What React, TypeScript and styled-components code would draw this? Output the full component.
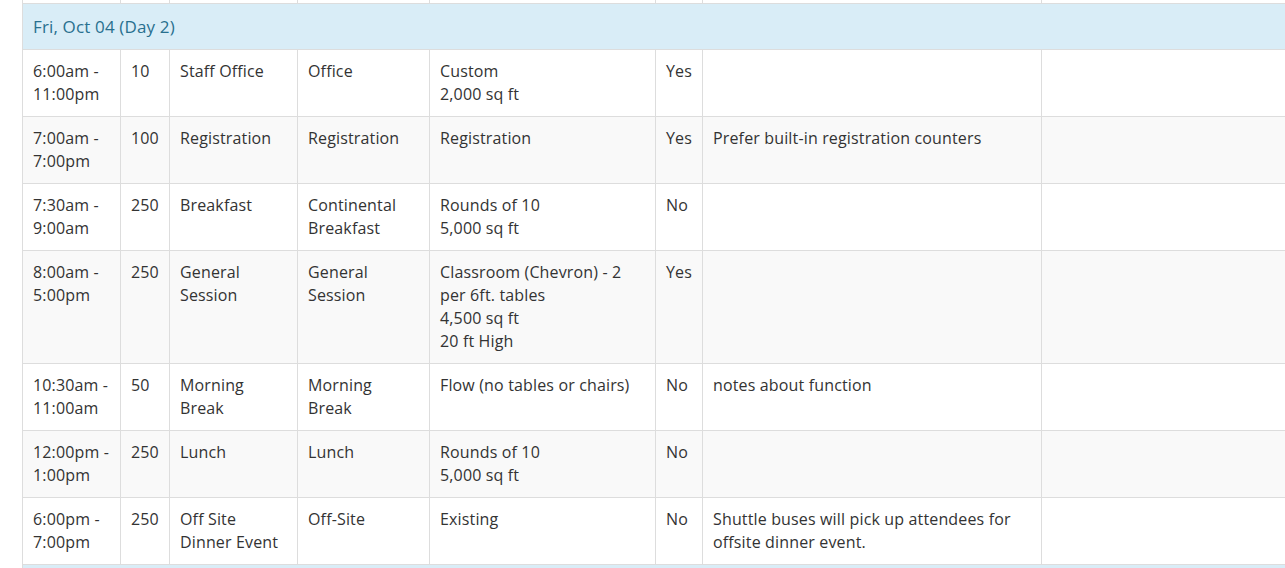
import React from "react";
import styled, { createGlobalStyle } from "styled-components";

const GlobalStyle = createGlobalStyle`
	html, body {
		margin: 0;
		padding: 0;
		background: #fff;
		overflow: hidden;
	}
	body {
		font-family: "Open Sans", "Liberation Sans", sans-serif;
		font-size: 16px;
		letter-spacing: 0.15px;
		color: #333;
	}
`;

const Page = styled.div`
	padding-left: 22px;
`;

const Table = styled.table`
	border-collapse: collapse;
	table-layout: fixed;
	width: 1320px;
	margin-top: -1px;
`;

const Cell = styled.td`
	border: 1px solid #ddd;
	padding: 10px;
	line-height: 23px;
	vertical-align: top;
	text-align: left;
	overflow-wrap: break-word;
`;

const SpacerCell = styled(Cell)`
	padding: 0;
	height: 3px;
	line-height: 0;
`;

const DayCell = styled.td`
	background: #d9edf7;
	color: #28708f;
	font-size: 17px;
	line-height: 24px;
	padding: 11px 10px 10px;
	border: 1px solid #ddd;
`;

const Row = styled.tr<{ striped?: boolean }>`
	background: ${props => props.striped ? '#f9f9f9' : '#fff'};
`;

const colWidths = [98, 49, 128, 132, 226, 47, 339, 301];

interface IFunctionRow {
	time: string;
	people: string;
	name: string;
	type: string;
	setup: string[];
	avIp: string;
	notes: string;
}

const rows: IFunctionRow[] = [
	{ time: '6:00am - 11:00pm', people: '10', name: 'Staff Office', type: 'Office', setup: ['Custom', '2,000 sq ft'], avIp: 'Yes', notes: '' },
	{ time: '7:00am - 7:00pm', people: '100', name: 'Registration', type: 'Registration', setup: ['Registration'], avIp: 'Yes', notes: 'Prefer built-in registration counters' },
	{ time: '7:30am - 9:00am', people: '250', name: 'Breakfast', type: 'Continental Breakfast', setup: ['Rounds of 10', '5,000 sq ft'], avIp: 'No', notes: '' },
	{ time: '8:00am - 5:00pm', people: '250', name: 'General Session', type: 'General Session', setup: ['Classroom (Chevron) - 2 per 6ft. tables', '4,500 sq ft', '20 ft High'], avIp: 'Yes', notes: '' },
	{ time: '10:30am - 11:00am', people: '50', name: 'Morning Break', type: 'Morning Break', setup: ['Flow (no tables or chairs)'], avIp: 'No', notes: 'notes about function' },
	{ time: '12:00pm - 1:00pm', people: '250', name: 'Lunch', type: 'Lunch', setup: ['Rounds of 10', '5,000 sq ft'], avIp: 'No', notes: '' },
	{ time: '6:00pm - 7:00pm', people: '250', name: 'Off Site Dinner Event', type: 'Off-Site', setup: ['Existing'], avIp: 'No', notes: 'Shuttle buses will pick up attendees for offsite dinner event.' },
];

const DayHeader = ({ label }: { label: string }) => (
	<tr>
		<DayCell colSpan={colWidths.length}>{label}</DayCell>
	</tr>
);

export default function App() {
	return (
		<Page>
			<GlobalStyle />
			<Table>
				<colgroup>
					{colWidths.map((w, idx) => <col key={idx} style={{ width: w }} />)}
				</colgroup>
				<tbody>
					<Row>
						{colWidths.map((_, idx) => <SpacerCell key={idx} />)}
					</Row>
					<DayHeader label="Fri, Oct 04 (Day 2)" />
					{rows.map((row, idx) => (
						<Row striped={idx % 2 === 1} key={idx}>
							<Cell>{row.time}</Cell>
							<Cell>{row.people}</Cell>
							<Cell>{row.name}</Cell>
							<Cell>{row.type}</Cell>
							<Cell>
								{row.setup.map((line, i) => <div key={i}>{line}</div>)}
							</Cell>
							<Cell>{row.avIp}</Cell>
							<Cell>{row.notes}</Cell>
							<Cell />
						</Row>
					))}
					<DayHeader label="Sat, Oct 05 (Day 3)" />
				</tbody>
			</Table>
		</Page>
	);
}
